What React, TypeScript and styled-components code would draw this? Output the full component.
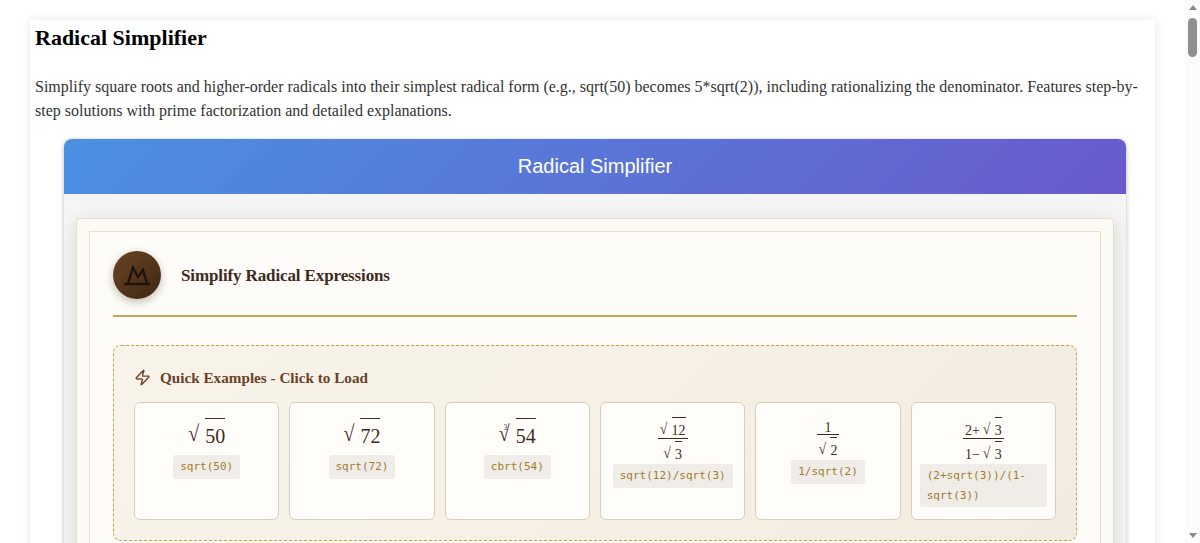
import React from "react";
import styled, { createGlobalStyle } from "styled-components";
import { Zap } from "lucide-react";

const GlobalStyle = createGlobalStyle`
  html, body {
    margin: 0;
    padding: 0;
    background: #fff;
  }
`;

interface Example {
  code: string;
  math: React.ReactNode;
  tall?: boolean;
}

const Root = ({ n, index }: { n: string; index?: string }) => (
  <RootWrap>
    <RootSign>
      √{index && <RootIndex>{index}</RootIndex>}
    </RootSign>
    <Radicand>{n}</Radicand>
  </RootWrap>
);

const App = () => {
  return (
    <>
      <GlobalStyle />
      <Article>
        <PageTitle>Radical Simplifier</PageTitle>
        <Intro>
          Simplify square roots and higher-order radicals into their simplest radical form (e.g.,
          sqrt(50) becomes 5*sqrt(2)), including rationalizing the denominator. Features step-by-step
          solutions with prime factorization and detailed explanations.
        </Intro>
        <Widget>
          <WidgetHeader>Radical Simplifier</WidgetHeader>
          <WidgetBody>
            <Paper>
              <PaperInner>
                <SectionHeader>
                  <Badge>
                    <svg width="28" height="24" viewBox="0 0 28 24" fill="none" stroke="#1f120a" strokeWidth="2.4">
                      <path d="M1 21h26" />
                      <path d="M5 20.5 10 4.5 15 14 20 7 24 20.5" />
                    </svg>
                  </Badge>
                  <SectionTitle>Simplify Radical Expressions</SectionTitle>
                </SectionHeader>
                <ExamplesBox>
                  <ExamplesTitle>
                    <Zap size={17} strokeWidth={2} />
                    Quick Examples - Click to Load
                  </ExamplesTitle>
                  <ExamplesGrid>
                    {examples.map(ex => (
                      <ExampleCard key={ex.code}>
                        <MathBlock $tall={ex.tall}>{ex.math}</MathBlock>
                        <Code>{ex.code}</Code>
                      </ExampleCard>
                    ))}
                  </ExamplesGrid>
                </ExamplesBox>
              </PaperInner>
            </Paper>
          </WidgetBody>
        </Widget>
      </Article>
      <Scrollbar>
        <ArrowUp />
        <Thumb />
        <ArrowDown />
      </Scrollbar>
    </>
  );
};

// Page
const Article = styled.main`
  box-sizing: border-box;
  margin: 20px 45px 0 30px;
  padding: 5px;
  min-height: 7080px;
  background: #fff;
  box-shadow: 0 0 10px rgba(0, 0, 0, 0.1);
  font-family: "Liberation Serif", serif;
`;

const PageTitle = styled.h1`
  margin: 0 0 24px;
  font-size: 22px;
  line-height: 26px;
  font-weight: 700;
  color: #000;
`;

const Intro = styled.p`
  margin: 0 0 16px;
  font-size: 16px;
  line-height: 24px;
  color: #333;
`;

// Widget
const Widget = styled.section`
  margin: 0 24px 0 29px;
  border-radius: 8px;
  background: #f5f5f5;
  box-shadow: 0 1px 4px rgba(0, 0, 0, 0.3);
  overflow: hidden;
`;

const WidgetHeader = styled.header`
  height: 55px;
  display: flex;
  align-items: center;
  justify-content: center;
  background: linear-gradient(135deg, #4a90e2, #6a5acd);
  color: #fff;
  font-family: "Liberation Sans", sans-serif;
  font-size: 20px;
`;

const WidgetBody = styled.div`
  padding: 24px 12px 40px;
`;

const Paper = styled.div`
  padding: 12px;
  border: 1px solid #e8dcc4;
  border-radius: 4px;
  background: #fcfaf5;
  box-shadow: 0 4px 20px rgba(0, 0, 0, 0.12);
`;

const PaperInner = styled.div`
  padding: 19px 23px 40px;
  border: 1px solid #eadfc8;
  background: #fdfcf8;
`;

const SectionHeader = styled.div`
  display: flex;
  align-items: center;
  gap: 20px;
  padding-bottom: 16px;
  border-bottom: 2px solid #c9a55c;
  margin-bottom: 28px;
`;

const Badge = styled.div`
  width: 48px;
  height: 48px;
  flex: none;
  display: flex;
  align-items: center;
  justify-content: center;
  border-radius: 50%;
  background: linear-gradient(135deg, #6b4423, #3e2714);
  box-shadow: 0 3px 9px rgba(62, 39, 20, 0.3);
`;

const SectionTitle = styled.h2`
  margin: 0;
  padding-top: 2px;
  font-family: "Liberation Serif", serif;
  font-size: 17px;
  letter-spacing: -0.12px;
  font-weight: 700;
  color: #3e2a1e;
`;

const ExamplesBox = styled.div`
  padding: 20px;
  border: 1px dashed #c8a24a;
  border-radius: 8px;
  background: linear-gradient(135deg, #f8f4ea, #f3ebdf);
`;

const ExamplesTitle = styled.h3`
  display: flex;
  align-items: center;
  gap: 9px;
  height: 23px;
  margin: 0 0 13px;
  font-family: "Liberation Serif", serif;
  font-size: 15.2px;
  font-weight: 700;
  color: #6b4226;

  svg {
    flex: none;
  }
`;

const ExamplesGrid = styled.div`
  display: grid;
  grid-template-columns: repeat(6, 1fr);
  gap: 10px;
`;

const ExampleCard = styled.div`
  box-sizing: border-box;
  display: flex;
  flex-direction: column;
  align-items: center;
  min-height: 118px;
  padding: 12px 8px;
  border: 1px solid #d9cdbd;
  border-radius: 6px;
  background: #fefdfa;
`;

// Math
const MathBlock = styled.div<{ $tall?: boolean }>`
  display: flex;
  justify-content: center;
  color: #3e2a1e;
  font-size: 20px;
  padding-top: ${p => (p.$tall ? "2px" : "3px")};
  margin-bottom: ${p => (p.$tall ? "2px" : "7px")};
`;

const RootWrap = styled.span`
  display: inline-flex;
  align-items: baseline;
`;

const RootSign = styled.span`
  position: relative;
  display: inline-block;
  margin-right: 0.3em;
  line-height: 1;
  transform: translateY(-0.14em) scaleY(1.12);
`;

const RootIndex = styled.span`
  position: absolute;
  left: 5px;
  top: 2px;
  font-size: 7px;
  line-height: 7px;
`;

const Radicand = styled.span`
  border-top: 1px solid #3e2a1e;
  padding-top: 6px;
  line-height: 23px;
`;

const Fraction = styled.span`
  display: inline-flex;
  flex-direction: column;
  align-items: stretch;
  font-size: 14px;
  line-height: 14px;

  ${Radicand} {
    line-height: 14px;
  }
`;

const Numerator = styled.span`
  display: flex;
  justify-content: center;
  align-items: baseline;
  gap: 3px;
  padding: 0 2px;
  border-bottom: 1px solid #3e2a1e;
`;

const Denominator = styled.span`
  display: flex;
  justify-content: center;
  align-items: baseline;
  gap: 3px;
  padding: 0 2px;
  margin-top: 2px;
`;

const PlainTerm = styled.span`
  padding-top: 4px;
  line-height: 13px;
`;

const Code = styled.code`
  display: inline-block;
  padding: 2px 7px;
  border-radius: 3px;
  background: #f0ece7;
  color: #a07c2c;
  font-family: "DejaVu Sans Mono", monospace;
  font-size: 11px;
  line-height: 19.5px;
`;

// Browser scrollbar, drawn since the screenshot hides the native one
const Scrollbar = styled.div`
  position: fixed;
  top: 0;
  right: 0;
  bottom: 0;
  width: 15px;
  display: flex;
  flex-direction: column;
  align-items: center;
  background: #fbfbfb;
`;

const ArrowUp = styled.div`
  margin-top: 5px;
  border: 4.5px solid transparent;
  border-top: 0;
  border-bottom: 5px solid #8a8a8a;
`;

const Thumb = styled.div`
  width: 9px;
  height: 39px;
  margin-top: 8px;
  border-radius: 5px;
  background: #8f8f8f;
`;

const ArrowDown = styled.div`
  margin-top: auto;
  margin-bottom: 5px;
  border: 4.5px solid transparent;
  border-bottom: 0;
  border-top: 5px solid #8a8a8a;
`;

// Data
const examples: Example[] = [
  { code: "sqrt(50)", math: <Root n="50" /> },
  { code: "sqrt(72)", math: <Root n="72" /> },
  { code: "cbrt(54)", math: <Root n="54" index="3" /> },
  {
    code: "sqrt(12)/sqrt(3)",
    math: (
      <Fraction>
        <Numerator>
          <Root n="12" />
        </Numerator>
        <Denominator>
          <Root n="3" />
        </Denominator>
      </Fraction>
    ),
    tall: true,
  },
  {
    code: "1/sqrt(2)",
    math: (
      <Fraction>
        <Numerator>
          <PlainTerm>1</PlainTerm>
        </Numerator>
        <Denominator>
          <Root n="2" />
        </Denominator>
      </Fraction>
    ),
    tall: true,
  },
  {
    code: "(2+sqrt(3))/(1-sqrt(3))",
    math: (
      <Fraction>
        <Numerator>
          2+
          <Root n="3" />
        </Numerator>
        <Denominator>
          1−
          <Root n="3" />
        </Denominator>
      </Fraction>
    ),
    tall: true,
  },
];

export default App;
